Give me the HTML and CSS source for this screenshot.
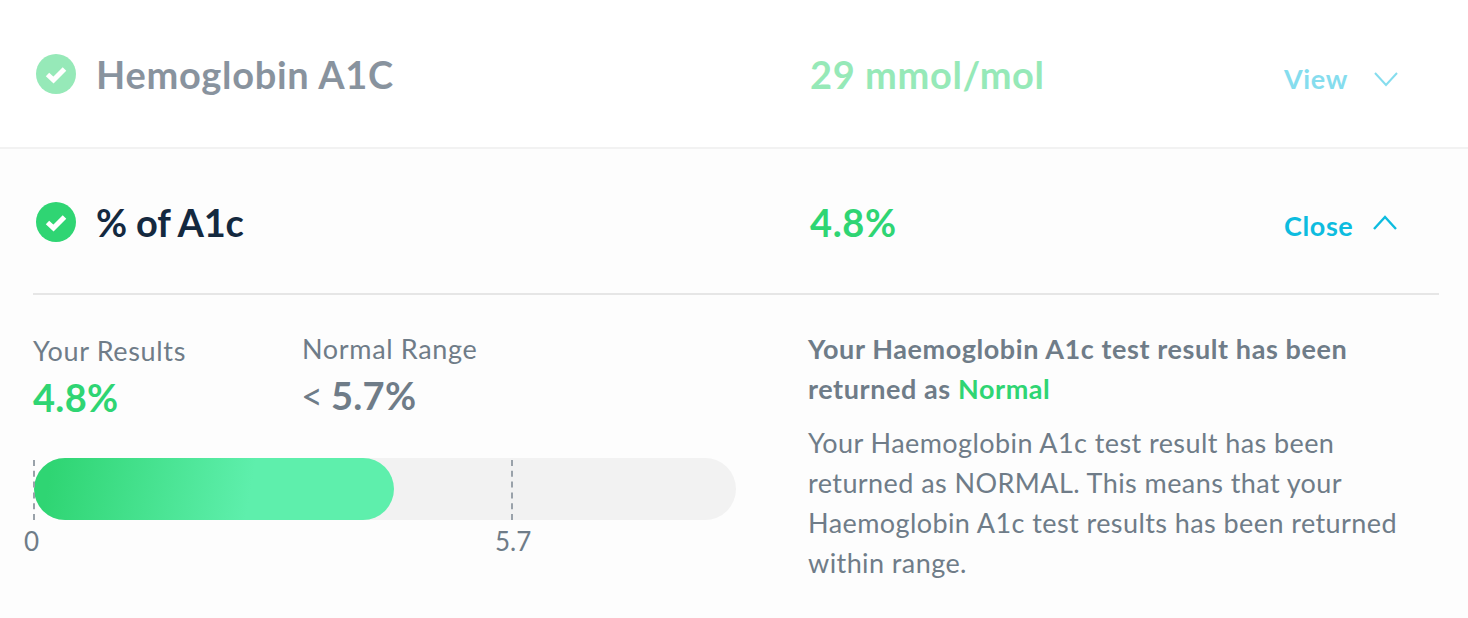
FILE: index.html
```html
<!DOCTYPE html>
<html lang="en">
<head>
    <meta charset="UTF-8">
    <meta name="viewport" content="width=device-width, initial-scale=1.0">
    <title>Hemoglobin A1C</title>
    <link rel="stylesheet" href="styles.css">
</head>
<body>
    <div class="row row-collapsed">
        <div class="row-name">
            <svg class="check" viewBox="0 0 40 40"><circle cx="20" cy="20" r="20" fill="#2fd573"/><path d="M11.5 20.5l6 5.5L28.5 15" fill="none" stroke="#fff" stroke-width="5"/></svg>
            <span class="row-title">Hemoglobin A1C</span>
        </div>
        <div class="row-value">29 mmol/mol</div>
        <div class="row-action view">
            <span>View</span>
            <svg class="chevron" viewBox="0 0 24 16"><path d="M1 2l11 12 11-12" fill="none" stroke="#0dbcdf" stroke-width="2"/></svg>
        </div>
    </div>

    <div class="panel">
        <div class="row row-open">
            <div class="row-name">
                <svg class="check" viewBox="0 0 40 40"><circle cx="20" cy="20" r="20" fill="#2fd573"/><path d="M11.5 20.5l6 5.5L28.5 15" fill="none" stroke="#fff" stroke-width="5"/></svg>
                <span class="row-title">% of A1c</span>
            </div>
            <div class="row-value">4.8%</div>
            <div class="row-action close">
                <span>Close</span>
                <svg class="chevron" viewBox="0 0 24 16"><path d="M1 14l11-12 11 12" fill="none" stroke="#0dbcdf" stroke-width="2.4"/></svg>
            </div>
        </div>

        <div class="details">
            <div class="chart">
                <div class="stats">
                    <div class="stat stat-yours">
                        <div class="stat-label">Your Results</div>
                        <div class="stat-value green">4.8%</div>
                    </div>
                    <div class="stat stat-range">
                        <div class="stat-label">Normal Range</div>
                        <div class="stat-value"><span class="lt">&lt;</span> 5.7%</div>
                    </div>
                </div>
                <div class="bar">
                    <div class="bar-fill"></div>
                    <div class="tick tick-zero"></div>
                    <div class="tick tick-max"></div>
                </div>
                <div class="scale">
                    <span>0</span>
                    <span class="scale-max">5.7</span>
                </div>
            </div>
            <div class="summary">
                <h3>Your Haemoglobin A1c test result has been returned as <span class="green">Normal</span></h3>
                <p>Your Haemoglobin A1c test result has been returned as NORMAL. This means that your Haemoglobin A1c test results has been returned within range.</p>
            </div>
        </div>
    </div>
</body>
</html>
```

FILE: styles.css
```css
body {
    margin: 0;
    background-color: #fff;
    font-family: "Lato", "Noto Sans", sans-serif;
    color: #6f7c88;
    height: 618px;
    overflow: hidden;
}
.row {
    display: flex;
    align-items: center;
}
.row-collapsed {
    height: 147px;
    padding: 0 36px;
    border-bottom: 2px solid #f2f2f2;
}
.row-collapsed .row-name,
.row-collapsed .row-value,
.row-collapsed .row-action {
    opacity: 0.5;
}
.row-name {
    display: flex;
    align-items: center;
    gap: 20px;
    width: 774px;
}
.check {
    width: 40px;
    height: 40px;
    flex-shrink: 0;
}
.row-title {
    font-size: 38px;
    font-weight: 700;
    letter-spacing: 0.7px;
    color: #14293f;
}
.row-open .row-title {
    letter-spacing: -0.2px;
}
.row-value {
    width: 474px;
    font-size: 38px;
    font-weight: 700;
    letter-spacing: 0.6px;
    color: #2fd573;
}
.row-action {
    display: flex;
    align-items: center;
    color: #0dbcdf;
    font-size: 27px;
    font-weight: 700;
    letter-spacing: 0.6px;
    position: relative;
}
.view {
    top: 5px;
    gap: 26px;
}
.close {
    top: 3px;
    gap: 20px;
}
.chevron {
    width: 24px;
    height: 16px;
    margin-top: -4px;
}
.view .chevron {
    margin-top: 0;
}
.panel {
    background-color: #fdfdfd;
    height: 469px;
    padding: 0 29px 0 33px;
}
.row-open {
    height: 142px;
    padding: 2px 0 0 3px;
    border-bottom: 2px solid #e6e6e6;
}
.details {
    display: flex;
    padding-top: 36px;
}
.chart {
    width: 775px;
}
.stats {
    display: flex;
}
.stat-yours {
    width: 269px;
    padding-top: 2px;
}
.stat-label {
    font-size: 27px;
    line-height: 36px;
    letter-spacing: 0.65px;
}
.stat-value {
    font-size: 38px;
    font-weight: 700;
    letter-spacing: 0.3px;
    line-height: 44px;
    margin-top: 6px;
}
.lt {
    font-weight: 400;
    margin-left: -1px;
    margin-right: -2px;
}
.green {
    color: #2fd573;
}
.bar {
    position: relative;
    width: 702px;
    height: 62px;
    margin: 39px 0 0 1px;
    background-color: #f2f2f2;
    border-radius: 31px;
}
.bar-fill {
    width: 360px;
    height: 100%;
    border-radius: 31px;
    background: linear-gradient(100deg, #2fd573 5%, #5eefac 60%);
}
.tick {
    position: absolute;
    top: 2px;
    bottom: 0;
    width: 0;
    border-left: 2px dashed #9aa2aa;
}
.tick-zero {
    left: -1px;
}
.tick-max {
    left: 477px;
}
.scale {
    position: relative;
    font-size: 26px;
    line-height: 36px;
    margin: 3px 0 0 -9px;
}
.scale-max {
    position: absolute;
    left: 471px;
}
.summary {
    width: 631px;
    margin-top: -2px;
    font-size: 27px;
    line-height: 40px;
    letter-spacing: 0.42px;
}
.summary h3 {
    margin: 0;
    font-size: 27px;
    font-weight: 700;
    letter-spacing: 0.58px;
    width: 600px;
}
.summary p {
    margin: 14px 0 0;
    width: 600px;
}
```
